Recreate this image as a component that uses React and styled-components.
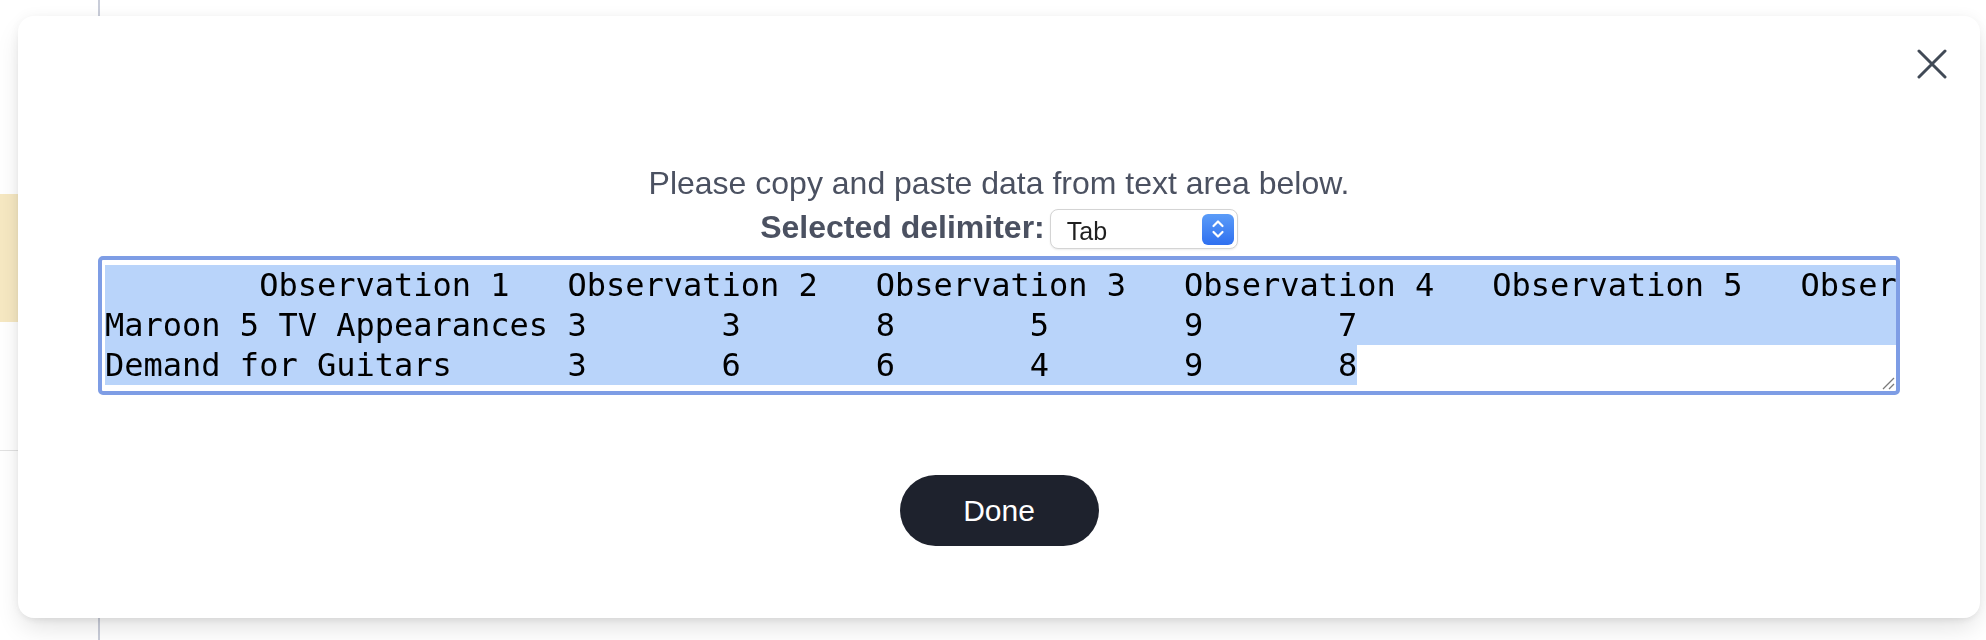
import React from "react";
import styled, { createGlobalStyle } from "styled-components";

const GlobalStyle = createGlobalStyle`
  html, body {
    margin: 0;
    padding: 0;
    background: #ffffff;
  }
  body {
    font-family: "Liberation Sans", Arial, sans-serif;
  }
`;

const Page = styled.div`
  width: 1986px;
  height: 640px;
  display: flex;
  overflow: hidden;
  background: #ffffff;
`;

const Sidebar = styled.div`
  width: 98px;
  flex: none;
  border-right: 2px solid #c9cdd9;
  display: flex;
  flex-direction: column;
`;

const SideSpacer = styled.div`
  height: ${(p) => p.$h}px;
  flex: none;
`;

const SideActive = styled.div`
  height: 128px;
  background: #f6e8c2;
`;

const SideDivider = styled.div`
  border-top: 1px solid #e2e2e2;
`;

const Main = styled.div`
  flex: 1;
`;

const Modal = styled.div`
  position: fixed;
  top: 16px;
  left: 18px;
  width: 1962px;
  box-sizing: border-box;
  background: #ffffff;
  border-radius: 16px;
  box-shadow: 0 12px 26px -4px rgba(0, 0, 0, 0.13), 0 4px 10px -4px rgba(0, 0, 0, 0.08),
    0 0 14px rgba(0, 0, 0, 0.05);
  padding: 149px 80px 72px;
  display: flex;
  flex-direction: column;
  align-items: center;
`;

const CloseButton = styled.button`
  position: absolute;
  top: 33px;
  right: 33px;
  width: 30px;
  height: 30px;
  padding: 0;
  border: none;
  background: none;
  cursor: pointer;
  display: block;
`;

const Title = styled.p`
  margin: 0;
  font-size: 32px;
  line-height: 37px;
  color: #4b5161;
`;

const DelimiterRow = styled.div`
  display: flex;
  align-items: center;
  gap: 5px;
  margin-top: 7px;
  height: 40px;
`;

const Label = styled.span`
  font-size: 32px;
  line-height: 36px;
  font-weight: 700;
  color: #4b5161;
  padding-bottom: 4px;
`;

const SelectBox = styled.div`
  width: 188px;
  height: 40px;
  box-sizing: border-box;
  border: 1px solid #d4d4d4;
  border-radius: 8px;
  background: #ffffff;
  box-shadow: 0 1px 2px rgba(0, 0, 0, 0.08);
  display: flex;
  align-items: center;
  justify-content: space-between;
  padding: 0 3px 0 16px;
`;

const SelectValue = styled.span`
  font-size: 25px;
  color: #1f1f1f;
  padding-top: 5px;
`;

const Stepper = styled.span`
  width: 32px;
  height: 31px;
  border-radius: 6px;
  background: linear-gradient(#5b9cf8, #2f70f0);
  display: flex;
  align-items: center;
  justify-content: center;
`;

const TextBox = styled.div`
  align-self: stretch;
  margin-top: 7px;
  position: relative;
  border: 4px solid #7e9de5;
  border-radius: 5px;
  padding: 5px 0 6px 3px;
  overflow: hidden;
  background: #ffffff;
  font-family: "DejaVu Sans Mono", monospace;
  font-size: 32px;
  line-height: 40px;
  color: #000000;
`;

const Line = styled.div`
  white-space: pre;
  tab-size: 8;
  height: 40px;
  background: ${(p) => (p.$selected ? "#b9d4fa" : "transparent")};
`;

const Selected = styled.span`
  display: inline-block;
  vertical-align: top;
  height: 40px;
  white-space: pre;
  tab-size: 8;
  background: #b9d4fa;
`;

const Grip = styled.svg`
  position: absolute;
  right: 0;
  bottom: 0;
`;

const DoneButton = styled.button`
  margin-top: 80px;
  width: 199px;
  height: 71px;
  border: none;
  border-radius: 36px;
  background: #1e222d;
  color: #ffffff;
  font-family: "Liberation Sans", Arial, sans-serif;
  font-size: 30px;
  cursor: pointer;
`;

const row1 = "\tObservation 1\tObservation 2\tObservation 3\tObservation 4\tObservation 5\tObservation 6";
const row2 = "Maroon 5 TV Appearances\t3\t3\t8\t5\t9\t7";
const row3 = "Demand for Guitars\t3\t6\t6\t4\t9\t8";

export default function App() {
  return (
    <>
      <GlobalStyle />
      <Page>
        <Sidebar>
          <SideSpacer $h={194} />
          <SideActive />
          <SideSpacer $h={128} />
          <SideDivider />
        </Sidebar>
        <Main />
      </Page>
      <Modal>
        <CloseButton aria-label="Close">
          <svg width="30" height="30" viewBox="0 0 30 30">
            <path d="M2 2L28 28M28 2L2 28" stroke="#414a56" strokeWidth="3" strokeLinecap="round" fill="none" />
          </svg>
        </CloseButton>
        <Title>Please copy and paste data from text area below.</Title>
        <DelimiterRow>
          <Label>Selected delimiter:</Label>
          <SelectBox>
            <SelectValue>Tab</SelectValue>
            <Stepper>
              <svg width="16" height="22" viewBox="0 0 16 22">
                <path d="M3.5 8L8 3.5L12.5 8M3.5 14L8 18.5L12.5 14" stroke="#ffffff" strokeWidth="2.2" strokeLinecap="round" strokeLinejoin="round" fill="none" />
              </svg>
            </Stepper>
          </SelectBox>
        </DelimiterRow>
        <TextBox>
          <Line $selected>{row1}</Line>
          <Line $selected>{row2}</Line>
          <Line>
            <Selected>{row3}</Selected>
          </Line>
          <Grip width="16" height="16" viewBox="0 0 16 16">
            <path d="M3 14L14 3M9 14L14 9" stroke="#7a7a7a" strokeWidth="1.3" fill="none" />
          </Grip>
        </TextBox>
        <DoneButton>Done</DoneButton>
      </Modal>
    </>
  );
}
